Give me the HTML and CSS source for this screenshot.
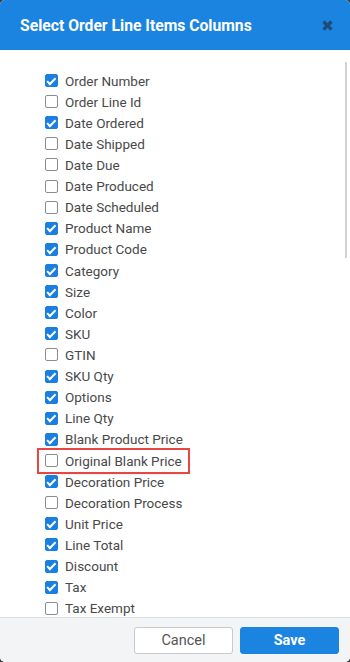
FILE: index.html
```html
<!DOCTYPE html>
<html>
<head>
<meta charset="utf-8">
<link rel="stylesheet" href="styles.css">
</head>
<body>
<div class="modal">
  <div class="modal-header">
    <span class="title">Select Order Line Items Columns</span>
    <svg class="close" width="11" height="11" viewBox="0 0 11 11"><path d="M1.5 1.5 L9.5 9.5 M9.5 1.5 L1.5 9.5" stroke="#1d4c7a" stroke-width="3.2" stroke-linecap="butt"/></svg>
  </div>
  <div class="modal-body">
    <ul class="list">
      <li class="item on"><span class="cb"></span>Order Number</li>
      <li class="item"><span class="cb"></span>Order Line Id</li>
      <li class="item on"><span class="cb"></span>Date Ordered</li>
      <li class="item"><span class="cb"></span>Date Shipped</li>
      <li class="item"><span class="cb"></span>Date Due</li>
      <li class="item"><span class="cb"></span>Date Produced</li>
      <li class="item"><span class="cb"></span>Date Scheduled</li>
      <li class="item on"><span class="cb"></span>Product Name</li>
      <li class="item on"><span class="cb"></span>Product Code</li>
      <li class="item on"><span class="cb"></span>Category</li>
      <li class="item on"><span class="cb"></span>Size</li>
      <li class="item on"><span class="cb"></span>Color</li>
      <li class="item on"><span class="cb"></span>SKU</li>
      <li class="item"><span class="cb"></span>GTIN</li>
      <li class="item on"><span class="cb"></span>SKU Qty</li>
      <li class="item on"><span class="cb"></span>Options</li>
      <li class="item on"><span class="cb"></span>Line Qty</li>
      <li class="item on"><span class="cb"></span>Blank Product Price</li>
      <li class="item highlight"><span class="cb"></span>Original Blank Price</li>
      <li class="item on"><span class="cb"></span>Decoration Price</li>
      <li class="item"><span class="cb"></span>Decoration Process</li>
      <li class="item on"><span class="cb"></span>Unit Price</li>
      <li class="item on"><span class="cb"></span>Line Total</li>
      <li class="item on"><span class="cb"></span>Discount</li>
      <li class="item on"><span class="cb"></span>Tax</li>
      <li class="item"><span class="cb"></span>Tax Exempt</li>
    </ul>
    <div class="scrollbar"></div>
  </div>
  <div class="modal-footer">
    <button class="btn btn-cancel">Cancel</button>
    <button class="btn btn-save">Save</button>
  </div>
</div>
</body>
</html>
```

FILE: styles.css
```css
* { box-sizing: border-box; }
html, body {
  margin: 0;
  padding: 0;
  background: #3b3b3b;
  width: 350px;
  height: 662px;
  overflow: hidden;
  font-family: Roboto, "Liberation Sans", sans-serif;
}
.modal {
  width: 350px;
  height: 662px;
  background: #fff;
  border-radius: 5px;
  overflow: hidden;
  display: flex;
  flex-direction: column;
}
.modal-header {
  height: 50px;
  flex: none;
  background: #1a84e0;
  display: flex;
  align-items: center;
  justify-content: space-between;
  padding: 0 17px 0 20px;
}
.title {
  color: #fff;
  font-weight: 700;
  font-size: 15.7px;
}
.close { display: block; }
.modal-body {
  flex: 1;
  position: relative;
  overflow: hidden;
}
.list {
  list-style: none;
  margin: 0;
  padding: 20px 0 0 45px;
}
.item {
  height: 21.12px;
  display: flex;
  align-items: center;
  font-size: 13.5px;
  color: #494949;
  width: max-content;
}
.cb {
  width: 13px;
  height: 13px;
  border: 1.5px solid #8b8b95;
  border-radius: 2px;
  margin-right: 7px;
  background: #fff;
  flex: none;
  position: relative;
}
.item.on .cb {
  background: #1a7fdf;
  border-color: #1a7fdf;
}
.item.on .cb::after {
  content: "";
  position: absolute;
  left: 3.3px;
  top: 0.6px;
  width: 3px;
  height: 6.5px;
  border: solid #fff;
  border-width: 0 2px 2px 0;
  transform: rotate(45deg);
}
.item.highlight {
  outline: 2px solid #e84545;
  margin-left: -6px;
  padding-left: 6px;
  padding-right: 6px;
  height: 22px;
  margin-top: 0;
  margin-bottom: -0.88px;
  box-shadow: 0 1px 3px rgba(0,0,0,0.3);
}
.scrollbar {
  position: absolute;
  right: 3px;
  top: 12px;
  width: 2px;
  height: 196px;
  background: #d2d2d2;
}
.modal-footer {
  height: 45px;
  flex: none;
  background: #f3f4f6;
  border-top: 1px solid #dcdde0;
  display: flex;
  align-items: center;
  justify-content: flex-end;
  gap: 7px;
  padding: 0 11px 0 0;
}
.btn {
  width: 99px;
  height: 27px;
  border-radius: 3px;
  font-family: Roboto, "Liberation Sans", sans-serif;
  font-size: 14.5px;
  cursor: pointer;
  padding: 0;
}
.btn-cancel {
  background: #fff;
  border: 1px solid #c9c9cc;
  color: #555;
}
.btn-save {
  background: #1a84e0;
  border: 1px solid #1a84e0;
  color: #fff;
  font-weight: 700;
}
```
